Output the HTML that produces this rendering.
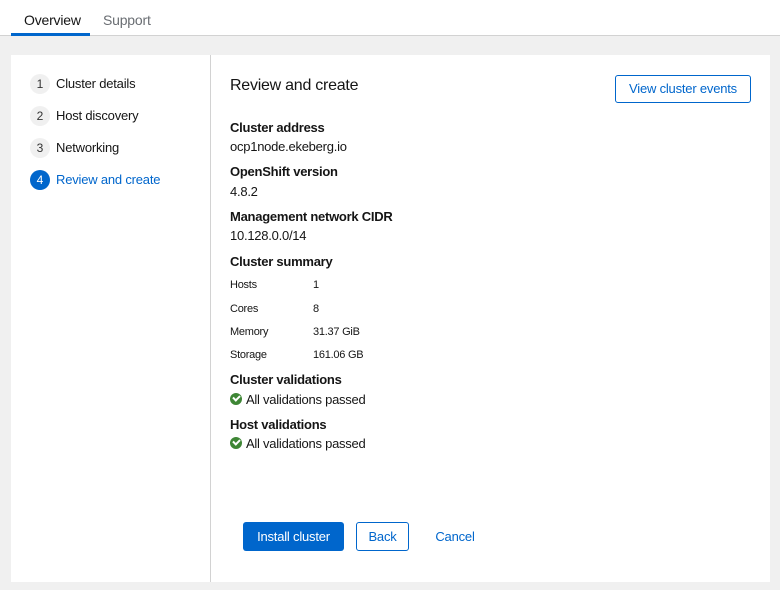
<!DOCTYPE html><html><head><style>
body{margin:0;width:780px;height:590px;background:#f0f0f0;font-family:"Liberation Sans",sans-serif;color:#151515;position:relative;overflow:hidden}
.tabs{position:absolute;left:0;top:0;width:780px;height:35px;background:#fff;border-bottom:1px solid #d2d2d2}
.tab{position:absolute;top:12px;font-size:14px;letter-spacing:-0.2px}
.card{position:absolute;left:11px;top:55px;width:759px;height:527px;background:#fff}
.nav{position:absolute;left:0;top:0;width:199px;height:527px;border-right:1px solid #d2d2d2}
.step{position:absolute;left:19px;font-size:13px;height:20px;line-height:20px;letter-spacing:-0.2px}
.num{display:inline-block;width:20px;height:20px;border-radius:50%;background:#f0f0f0;text-align:center;font-size:12px;margin-right:6px;color:#333;letter-spacing:0}
.t{position:absolute;left:219px;font-size:13px;letter-spacing:-0.25px}
.b{font-weight:bold}
.s{font-size:11px}
.chk{display:inline-block;width:12px;height:12px;border-radius:50%;background:#3e8635;vertical-align:-1px;margin-right:4px;position:relative}
.chk:after{content:"";position:absolute;left:3px;top:2px;width:5px;height:3px;border-left:2px solid #fff;border-bottom:2px solid #fff;transform:rotate(-45deg)}
.btn{position:absolute;font-size:13px;border-radius:3px;text-align:center;box-sizing:border-box;letter-spacing:-0.2px}
</style></head><body>
<div class="tabs"><span class="tab" style="left:24px">Overview</span><span class="tab" style="left:103px;color:#6a6e73">Support</span>
<div style="position:absolute;left:11px;top:33px;width:79px;height:3px;background:#06c"></div></div>
<div class="card">
<div class="nav">
<div class="step" style="top:19px"><span class="num">1</span>Cluster details</div>
<div class="step" style="top:51px"><span class="num">2</span>Host discovery</div>
<div class="step" style="top:83px"><span class="num">3</span>Networking</div>
<div class="step" style="top:115px;color:#06c"><span class="num" style="background:#06c;color:#fff">4</span>Review and create</div>
</div>
<div class="t" style="top:22px;font-size:16px">Review and create</div>
<div class="btn" style="left:604px;top:20px;width:136px;height:28px;line-height:26px;border:1px solid #06c;color:#06c">View cluster events</div>
<div class="t b" style="top:65px">Cluster address</div>
<div class="t" style="top:84px">ocp1node.ekeberg.io</div>
<div class="t b" style="top:109px">OpenShift version</div>
<div class="t" style="top:129px">4.8.2</div>
<div class="t b" style="top:154px">Management network CIDR</div>
<div class="t" style="top:173px">10.128.0.0/14</div>
<div class="t b" style="top:199px">Cluster summary</div>
<div class="t s" style="top:224px">Hosts</div><div class="t s" style="top:224px;left:302px">1</div>
<div class="t s" style="top:248px">Cores</div><div class="t s" style="top:248px;left:302px">8</div>
<div class="t s" style="top:271px">Memory</div><div class="t s" style="top:271px;left:302px">31.37 GiB</div>
<div class="t s" style="top:294px">Storage</div><div class="t s" style="top:294px;left:302px">161.06 GB</div>
<div class="t b" style="top:317px">Cluster validations</div>
<div class="t" style="top:337px"><span class="chk"></span>All validations passed</div>
<div class="t b" style="top:362px">Host validations</div>
<div class="t" style="top:381px"><span class="chk"></span>All validations passed</div>
<div class="btn" style="left:232px;top:467px;width:101px;height:29px;line-height:29px;background:#06c;color:#fff">Install cluster</div>
<div class="btn" style="left:345px;top:467px;width:53px;height:29px;line-height:27px;border:1px solid #06c;color:#06c">Back</div>
<div class="btn" style="left:418px;top:467px;width:52px;height:29px;line-height:29px;color:#06c">Cancel</div>
</div>
</body></html>
